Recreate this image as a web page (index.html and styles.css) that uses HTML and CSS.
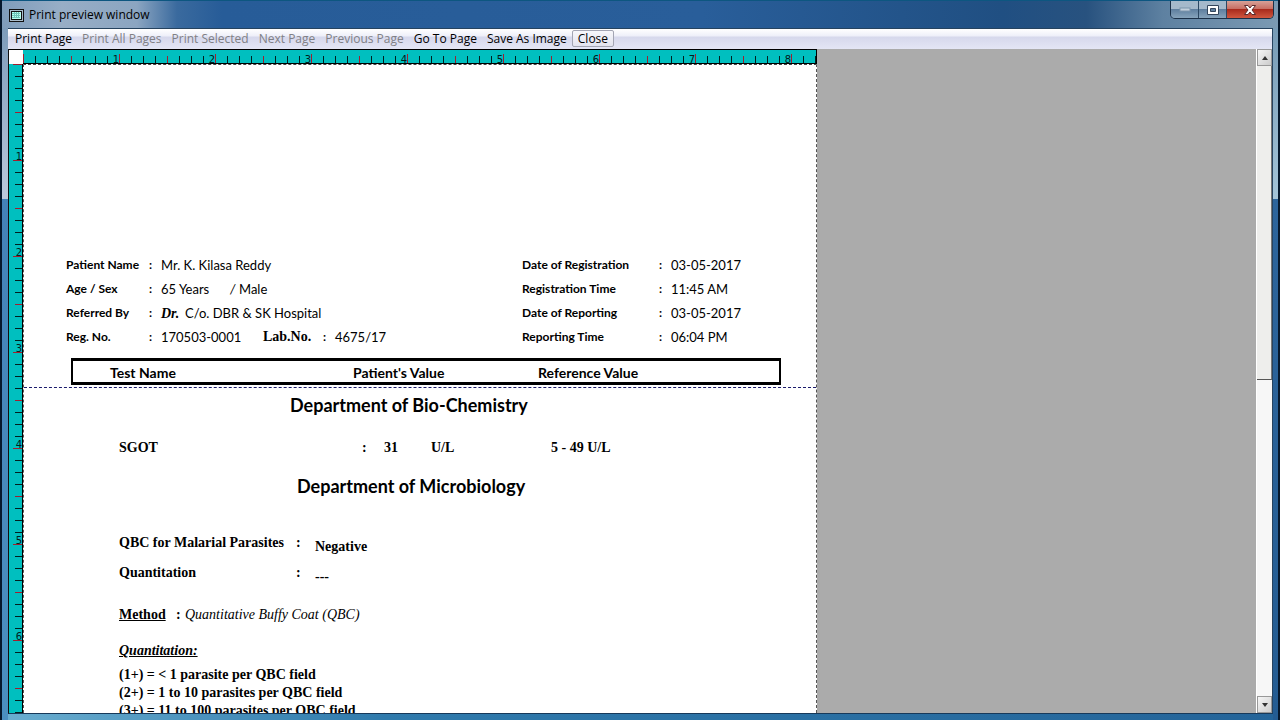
FILE: index.html
```html
<!DOCTYPE html>
<html lang="en">
<head>
    <meta charset="UTF-8">
    <title>Print preview window</title>
    <meta name="viewport" content="width=device-width, initial-scale=1.0">
    <link rel="stylesheet" href="styles.css">
</head>
<body>
<div class="window">
    <header class="titlebar">
        <svg class="app-icon" width="16" height="14" viewBox="0 0 16 14" shape-rendering="crispEdges">
            <rect x="1" y="1" width="14" height="12" fill="#a9bccb" stroke="#111" stroke-width="1"/>
            <rect x="3" y="3" width="10" height="8" fill="#b8fff0" stroke="#111"/>
            <path d="M4 5h8M4 7h8M4 9h8M6 4v6M8 4v6M10 4v6" stroke="#6fc4b8"/>
        </svg>
        <h1>Print preview window</h1>
        <div class="caption-buttons">
            <button class="min" aria-label="Minimize">
                <svg width="12" height="5"><rect x="1" y="1" width="10" height="3" fill="#c3d0dc" stroke="#7d95ac"/></svg>
            </button>
            <button class="max" aria-label="Maximize">
                <svg width="12" height="10"><path fill="#fff" stroke="#34465c" fill-rule="evenodd" d="M.5.5h11v9H.5zM3.500 3.500v3h5v-3z"/></svg>
            </button>
            <button class="close" aria-label="Close window">
                <svg width="12" height="10"><path fill="#fff" stroke="#5b2a2c" d="M.5.5h3.500L6 3 8 .5h3.500L8 5l3.500 4.500H8L6 7 4 9.500H.5L4 5z"/></svg>
            </button>
        </div>
    </header>

    <nav class="toolbar">
        <button>Print Page</button>
        <button disabled>Print All Pages</button>
        <button disabled>Print Selected</button>
        <button disabled>Next Page</button>
        <button disabled>Previous Page</button>
        <button>Go To Page</button>
        <button>Save As Image</button>
        <button class="active">Close</button>
    </nav>

    <main class="viewer">
        <div class="canvas">
            <div class="corner"></div>
            <div class="ruler-x">
                <span>1</span><span>2</span><span>3</span><span>4</span><span>5</span><span>6</span><span>7</span><span>8</span>
            </div>
            <div class="ruler-y">
                <span>1</span><span>2</span><span>3</span><span>4</span><span>5</span><span>6</span>
            </div>
            <article class="paper">
                <section class="page-head">
                    <div class="info">
                        <b>Patient Name</b><b>:</b><span>Mr. K. Kilasa Reddy</span>
                        <b>Date of Registration</b><b>:</b><span>03-05-2017</span>
                        <b>Age / Sex</b><b>:</b><span class="age"><span>65 Years</span><i>/</i><span>Male</span></span>
                        <b>Registration Time</b><b>:</b><span>11:45 AM</span>
                        <b>Referred By</b><b>:</b><span><em class="dr">Dr.</em>C/o. DBR &amp; SK Hospital</span>
                        <b>Date of Reporting</b><b>:</b><span>03-05-2017</span>
                        <b>Reg. No.</b><b>:</b><span class="reg"><span>170503-0001</span><b class="lab">Lab.No.</b><b>:</b><span>4675/17</span></span>
                        <b>Reporting Time</b><b>:</b><span>06:04 PM</span>
                    </div>
                    <div class="columns-head">
                        <span>Test Name</span><span>Patient's Value</span><span>Reference Value</span>
                    </div>
                </section>

                <section class="results">
                    <h2>Department of Bio-Chemistry</h2>
                    <div class="test">
                        <span>SGOT</span><span>:</span><span>31</span><span>U/L</span><span>5 - 49 U/L</span>
                    </div>
                    <h2 class="micro">Department of Microbiology</h2>
                    <div class="findings">
                        <span>QBC for Malarial Parasites</span><span>:</span><span class="value">Negative</span>
                        <span>Quantitation</span><span>:</span><span class="value">---</span>
                    </div>
                    <p class="method"><u>Method</u><span>:</span><em>Quantitative Buffy Coat (QBC)</em></p>
                    <h3>Quantitation:</h3>
                    <ul>
                        <li>(1+) = &lt; 1 parasite per QBC field</li>
                        <li>(2+) = 1 to 10 parasites per QBC field</li>
                        <li>(3+) = 11 to 100 parasites per QBC field</li>
                    </ul>
                </section>
            </article>
        </div>
        <div class="scrollbar">
            <button aria-label="Scroll up"><svg width="6" height="4"><path d="M0 4l3-4 3 4z" fill="#333"/></svg></button>
            <div class="thumb"></div>
            <div class="track"></div>
            <button aria-label="Scroll down"><svg width="6" height="4"><path d="M0 0l3 4 3-4z" fill="#333"/></svg></button>
        </div>
    </main>
</div>
</body>
</html>
```
FILE: styles.css
```css
* { box-sizing: border-box; }
body { margin: 0; font-family: "Open Sans", sans-serif; font-size: 12px; color: #000; }
button { font: inherit; color: inherit; margin: 0; padding: 0; border: none; background: none; }
h1, h2, h3, p, ul { margin: 0; padding: 0; }

/* window frame */
.window {
    height: 100vh; display: flex; flex-direction: column; overflow: hidden;
    padding: 0 5px 6px 6px; border-left: 2px solid #06182c; border-right: 2px solid #06182c;
    background:
        linear-gradient(#7294b4, #bcc9dc 199px, #4482b8 199px, #4b8fc0) left / 6px 100% no-repeat,
        linear-gradient(#6f94b0, #a4c4d8 199px, #2d659c 199px, #245c92) right / 5px 100% no-repeat,
        linear-gradient(90deg, #6aaed0, #2f7aac 30%, #246499);
}
.titlebar {
    flex: none; height: 28px; display: flex; align-items: center; margin: 0 -5px 0 -6px; padding-left: 6px;
    border-top: 1px solid #0d5680;
    background: linear-gradient(90deg, #7f9dbb 0, #98aec6 60px, #8ba5c1 135px, #3a6a9e 175px, #275c98 220px, #295e9a 700px, #204f82 1000px, #28527f 85%, #5e81a1 91%, #7b9ab3);
}
.titlebar h1 { flex: 1; margin-left: 5px; padding-bottom: 1px; font-size: 12px; font-weight: normal; }
.caption-buttons {
    align-self: flex-start; display: flex; margin-right: 4px;
    border: 1px solid #1b3048; border-top: none; border-radius: 0 0 5px 5px; overflow: hidden;
}
.caption-buttons button { height: 17px; display: flex; align-items: center; justify-content: center; }
.min, .max { width: 28px; border-right: 1px solid #2c4863; background: linear-gradient(#a5b9cb 50%, #5f7f9f 50%, #86a3bb); }
.caption-buttons .close { width: 46px; background: linear-gradient(#d7a198, #c66a5e 50%, #a92b1d 50%, #d0573f); }

/* toolbar */
.toolbar {
    flex: none; height: 21px; display: flex; align-items: center; padding: 0 0 1px 2px;
    border-top: 1px solid #26435f; border-right: 1px solid #26435f;
    background: linear-gradient(#fff, #eeeff9 35%, #d6d8ec 40%, #e4e6f5);
}
.toolbar button { height: 17px; line-height: 15px; padding: 0 4px; border: 1px solid transparent; border-radius: 2px; white-space: nowrap; }
.toolbar button:disabled { color: #808085; }
.toolbar .active { padding: 0 5px; border-color: #a3a5b3; background: linear-gradient(#f7f7fb, #e2e3ee); }

/* preview area */
.viewer { flex: 1; min-height: 0; display: flex; background: #ababab; border-left: 1px solid #111; border-bottom: 1px solid #17395a; }
.canvas { flex: 1; display: grid; grid-template-columns: 14px 794px; grid-template-rows: 15px 1fr; overflow: hidden; }
.corner { background: #fff; border-top: 1px solid #000; }
.ruler-x, .ruler-y { display: flex; overflow: hidden; color: #002020; font: 10px/10px "DejaVu Sans", sans-serif; }
.ruler-x span, .ruler-y span { flex: none; text-align: right; }
.ruler-x {
    border: solid #000; border-width: 1px 1px 1px 0;
    background:
        linear-gradient(90deg, transparent 95px, #a02030 95px) 1px 4px / 96px 9px repeat-x,
        linear-gradient(90deg, transparent 47px, #a02030 47px 48px, transparent 48px) 1px 6px / 96px 7px repeat-x,
        linear-gradient(90deg, transparent 11px, #002020 11px) 1px 6px / 12px 7px repeat-x,
        #00bfbf;
}
.ruler-x span { width: 96px; padding-top: 5px; }
.ruler-y {
    flex-direction: column; border-right: 1px solid #000;
    background:
        linear-gradient(transparent 95px, #a02030 95px) 4px 1px / 9px 96px repeat-y,
        linear-gradient(transparent 47px, #a02030 47px 48px, transparent 48px) 6px 1px / 7px 96px repeat-y,
        linear-gradient(transparent 11px, #002020 11px) 6px 1px / 7px 12px repeat-y,
        #00bfbf;
}
.ruler-y span { height: 96px; padding-top: 88px; }
.paper { background: #fff; border-top: 1px dashed #444; border-right: 1px dashed #555; border-left: 1px dashed #555; overflow: hidden; font-family: Lato, sans-serif; }

/* patient details */
.page-head { padding: 188px 35px 2px 42px; border-bottom: 1px dashed #1b1b6c; }
.info {
    display: grid; grid-template-columns: 83px 12px 361px 137px 12px 1fr; grid-auto-rows: 24px; align-items: center;
    font-size: 13px; white-space: nowrap;
}
.info > b { padding-bottom: 2px; font-size: 12px; }
.age, .reg { display: flex; }
.age > span:first-child { width: 69px; }
.age i { width: 9px; }
.dr { display: inline-block; width: 24px; font: italic bold 14px/16px "Liberation Serif", serif; }
.reg > span:first-child { width: 102px; }
.reg b { font-size: 12px; width: 12px; }
.reg .lab { width: 60px; font: bold 14px/16px "Liberation Serif", serif; }
.columns-head {
    display: grid; grid-template-columns: 243px 185px 1fr; align-items: center;
    height: 27px; margin: 9px 0 0 5px; padding: 1px 0 0 37px; border: solid #000; border-width: 3px 2px;
    font-size: 14px; font-weight: bold;
}

/* results */
.results { padding-left: 95px; font: bold 14px/18px "Liberation Serif", serif; }
.results h2 { margin: 5px 0 0 171px; font: bold 18px/24px Lato, sans-serif; }
.results .micro { margin: 17px 0 0 178px; }
.test { display: grid; grid-template-columns: 243px 22px 47px 120px 1fr; margin-top: 22px; }
.findings { display: grid; grid-template-columns: 177px 19px 1fr; grid-auto-rows: 30px; margin-top: 36px; }
.findings .value { padding-top: 4px; }
.method { display: flex; margin-top: 12px; }
.method u { width: 57px; }
.method span { width: 9px; }
.method em { font-weight: normal; }
.results h3 { margin: 18px 0 6px; font-size: 14px; font-style: italic; text-decoration: underline; }
.results ul { list-style: none; }

/* scroll bar */
.scrollbar { flex: none; width: 17px; display: flex; flex-direction: column; background: #f8f8f8; border-left: 1px solid #fff; border-right: 1px solid #26435f; }
.scrollbar button { flex: none; height: 17px; display: flex; align-items: center; justify-content: center; border: 1px solid #999; background: linear-gradient(135deg, #f6f6f6, #ccc); }
.thumb { flex: 314; background: #eeeeec; border-right: 1px solid #777; border-bottom: 1px solid #555; }
.track { flex: 318; background: #f7f7f7; }
```
